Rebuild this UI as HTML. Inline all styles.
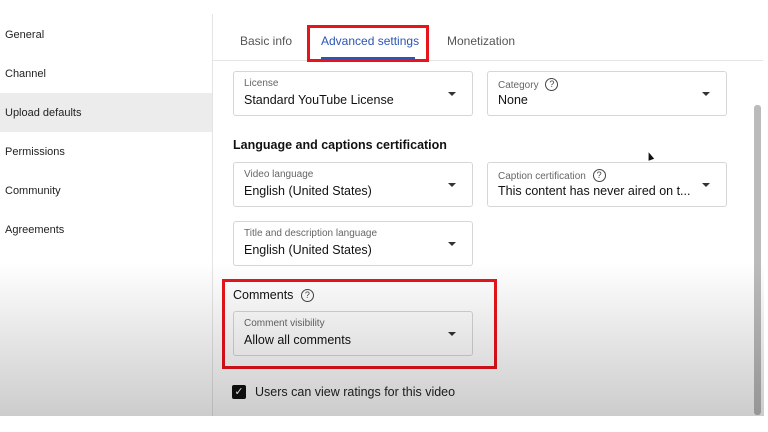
<!DOCTYPE html>
<html><head><style>
*{margin:0;padding:0;box-sizing:border-box}
body{width:768px;height:432px;background:#fff;font-family:"Liberation Sans",sans-serif;position:relative;overflow:hidden;color:#0d0d0d}
.a{position:absolute}
.nav{font-size:11px;color:#222;left:5px}
.box{position:absolute;border:1px solid #d6d6d6;border-radius:3px;background:#fff}
.box .l{position:absolute;left:10px;top:6px;font-size:10px;color:#666}
.box .v{position:absolute;left:10px;top:21px;font-size:12.5px;color:#111;white-space:nowrap}
.box .c{position:absolute;right:16px;top:20px;width:0;height:0;border-left:4px solid transparent;border-right:4px solid transparent;border-top:4px solid #333}
.q{display:inline-block;width:13px;height:13px;border:1.3px solid #444;border-radius:50%;font-size:9px;text-align:center;line-height:11px;vertical-align:1px;margin-left:4px;color:#444}
</style></head><body>
<div class="a" style="left:0;top:93px;width:212px;height:39px;background:#ececec"></div>
<div class="a" style="left:212px;top:14px;width:1px;height:402px;background:#e4e4e4"></div>
<div class="a nav" style="top:29px">General</div>
<div class="a nav" style="top:68px">Channel</div>
<div class="a nav" style="top:107px">Upload defaults</div>
<div class="a nav" style="top:146px">Permissions</div>
<div class="a nav" style="top:185px">Community</div>
<div class="a nav" style="top:224px">Agreements</div>

<div class="a" style="left:213px;top:60px;width:550px;height:1px;background:#e4e4e4"></div>
<div class="a" style="left:240px;top:34px;font-size:12px;color:#555">Basic info</div>
<div class="a" style="left:321px;top:34px;font-size:12px;color:#2b55b5">Advanced settings</div>
<div class="a" style="left:321px;top:57px;width:94px;height:3px;background:#2b55b5"></div>
<div class="a" style="left:447px;top:34px;font-size:12px;color:#555">Monetization</div>
<div class="a" style="left:307px;top:25px;width:122px;height:37px;border:3px solid #e8141b"></div>

<div class="box" style="left:233px;top:71px;width:240px;height:45px"><div class="l">License</div><div class="v">Standard YouTube License</div><div class="c"></div></div>
<div class="box" style="left:487px;top:71px;width:240px;height:45px"><div class="l">Category <span class="q">?</span></div><div class="v">None</div><div class="c"></div></div>
<div class="a" style="left:233px;top:138px;font-size:12.5px;font-weight:bold;color:#111">Language and captions certification</div>
<div class="box" style="left:233px;top:162px;width:240px;height:45px"><div class="l">Video language</div><div class="v">English (United States)</div><div class="c"></div></div>
<div class="box" style="left:487px;top:162px;width:240px;height:45px"><div class="l">Caption certification <span class="q">?</span></div><div class="v">This content has never aired on t...</div><div class="c"></div></div>
<div class="box" style="left:233px;top:221px;width:240px;height:45px"><div class="l">Title and description language</div><div class="v">English (United States)</div><div class="c"></div></div>
<div class="a" style="left:233px;top:288px;font-size:12.5px;color:#111">Comments <span class="q">?</span></div>
<div class="box" style="left:233px;top:311px;width:240px;height:45px"><div class="l">Comment visibility</div><div class="v">Allow all comments</div><div class="c"></div></div>
<div class="a" style="left:222px;top:279px;width:275px;height:90px;border:3px solid #e8141b"></div>
<div class="a" style="left:232px;top:385px;width:14px;height:14px;background:#111;border-radius:2px;color:#fff;font-size:11px;text-align:center;line-height:14px">✓</div>
<div class="a" style="left:255px;top:385px;font-size:12.5px;color:#222">Users can view ratings for this video</div>
<div class="a" style="left:754px;top:105px;width:7px;height:310px;background:#bbb;border-radius:3px"></div>
<div class="a" style="left:647px;top:152px;width:0;height:0;border-left:3px solid transparent;border-right:3px solid transparent;border-bottom:8px solid #111;transform:rotate(-20deg)"></div>
<div class="a" style="left:0;top:262px;width:764px;height:154px;background:linear-gradient(rgba(0,0,0,0),rgba(0,0,0,0.2))"></div>
</body></html>
